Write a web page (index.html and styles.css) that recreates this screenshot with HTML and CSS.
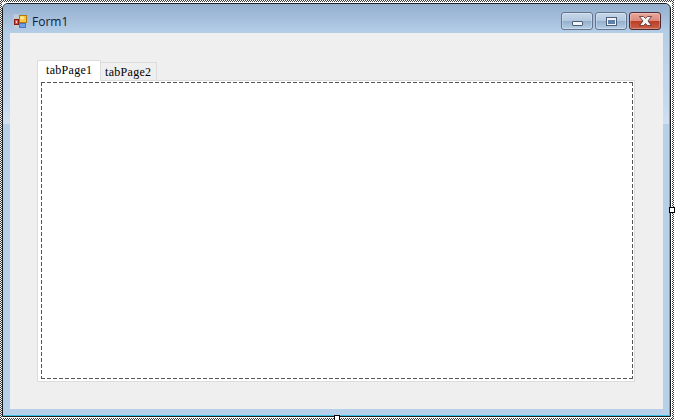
FILE: index.html
```html
<!DOCTYPE html>
<html lang="en">
<head>
<meta charset="utf-8">
<title>Form1</title>
<link rel="stylesheet" href="styles.css">
</head>
<body>
<div class="selection">
  <div class="window">
    <div class="glass"></div>
    <header class="titlebar">
      <svg class="app-icon" width="15" height="15" viewBox="0 0 15 15">
        <rect x="0.5" y="0.5" width="6" height="6" fill="#c5cbd3"/>
        <rect x="1.5" y="9.500" width="5" height="5" fill="#c5cbd3"/>
        <rect x="1.500" y="5.500" width="4" height="5" fill="#e8524a" stroke="#8c1a14"/>
        <rect x="3" y="7" width="1" height="2" fill="#ffd0c8"/>
        <rect x="6.5" y="1.5" width="7" height="7" fill="#fbc73c" stroke="#b07a10"/>
        <rect x="7.5" y="2.5" width="3" height="3" fill="#ffeca0"/>
        <rect x="6.5" y="9.5" width="6" height="4" fill="#6f9fe4" stroke="#4a78c0"/>
      </svg>
      <span class="title">Form1</span>
      <div class="controls">
        <div class="btn">
          <span class="min-glyph"></span>
        </div>
        <div class="btn">
          <span class="max-glyph"></span>
        </div>
        <div class="btn close">
          <svg width="13" height="10" viewBox="0 0 13 10">
            <path d="M0.500 0.500H4.500L6.500 2.500L8.500 0.500H12.500L9 5L12.500 9.500H8.500L6.500 7.500L4.500 9.500H0.500L4 5Z" fill="#f4f6f8" stroke="#5a2a2a" stroke-width="0.8"/>
          </svg>
        </div>
      </div>
    </header>
    <main class="client">
      <div class="tabs">
        <div class="tab active">tabPage1</div>
        <div class="tab">tabPage2</div>
      </div>
      <div class="page">
        <div class="page-inner"></div>
      </div>
    </main>
  </div>
  <span class="handle handle-right"></span>
  <span class="handle handle-bottom"></span>
</div>
</body>
</html>
```
FILE: styles.css
```css
html, body {
  margin: 0;
  padding: 0;
  background: #fff;
}
body {
  width: 676px;
  height: 420px;
  overflow: hidden;
}
.selection {
  position: relative;
  box-sizing: border-box;
  width: 674px;
  height: 420px;
  padding: 1px 1px 1px 0;
  border: 2px solid transparent;
  background:
    linear-gradient(#fff, #fff) padding-box,
    repeating-conic-gradient(#3a3a3a 0 25%, #fff 0 50%) 0 0 / 2px 2px border-box;
}
.window {
  position: relative;
  box-sizing: border-box;
  width: 669px;
  height: 414px;
  display: flex;
  flex-direction: column;
  border: 1px solid #1c1c1c;
  border-radius: 6px 6px 0 0;
  background: #b6d0ea;
  box-shadow: inset -1px -1px 0 #39c0e0;
}
.glass {
  position: absolute;
  left: 0;
  right: 1px;
  top: 0;
  height: 120px;
  border-radius: 5px 5px 0 0;
  background: linear-gradient(180deg, #94afce 0, #b5cee8 29px, #c6daef 100px, #d0e1f2 120px);
}
.titlebar {
  position: relative;
  flex: none;
  box-sizing: border-box;
  height: 29px;
  display: flex;
  align-items: center;
  padding: 5px 9px 0 10px;
}
.app-icon {
  flex: none;
}
.title {
  margin-left: 4px;
  font: 12px "Open Sans", "Noto Sans", sans-serif;
  color: #0f1c38;
}
.controls {
  margin-left: auto;
  display: flex;
  gap: 2px;
}
.btn {
  box-sizing: border-box;
  width: 32px;
  height: 18px;
  display: flex;
  align-items: center;
  justify-content: center;
  border: 1px solid #64748e;
  border-radius: 3px;
  background: linear-gradient(180deg, #c6d7e9 0, #b3c8de 48%, #93aecb 50%, #b7cfe6 100%);
  box-shadow: inset 0 0 0 1px rgba(255,255,255,.28);
}
.btn.close {
  border-color: #4d2a33;
  background: linear-gradient(180deg, #e8a79c 0, #dd8a7c 48%, #bc3c22 50%, #c9604a 100%);
}
.min-glyph {
  box-sizing: border-box;
  width: 11px;
  height: 5px;
  margin-top: 5px;
  border: 1px solid #4c5c74;
  border-radius: 1px;
  background: #f2f4f7;
}
.max-glyph {
  box-sizing: border-box;
  width: 11px;
  height: 9px;
  border: 2px solid #f2f4f7;
  border-top-width: 3px;
  outline: 1px solid #4c5c74;
  outline-offset: -1px;
  background: #5f7fa8;
}
.client {
  position: relative;
  box-sizing: border-box;
  width: 653px;
  height: 376px;
  margin-left: 7px;
  padding: 27px 0 0 27px;
  background: #efefef;
}
.tabs {
  position: relative;
  z-index: 1;
  display: flex;
  align-items: flex-end;
  height: 21px;
  margin-bottom: -1px;
}
.tab {
  box-sizing: border-box;
  width: 56px;
  height: 19px;
  border: 1px solid #dcdcdc;
  border-left: 0;
  padding-left: 4px;
  font: 12px/18px "Liberation Serif", serif;
  letter-spacing: 0.3px;
  color: #000;
  background: #efefef;
}
.tab.active {
  width: 64px;
  height: 21px;
  border-left: 1px solid #dcdcdc;
  border-bottom: 0;
  padding-left: 8px;
  background: #fff;
  line-height: 18px;
}
.page {
  box-sizing: border-box;
  width: 598px;
  height: 302px;
  padding: 1px 1px 2px 3px;
  border: 1px solid #dcdcdc;
  background: #fff;
}
.page-inner {
  height: 100%;
  background:
    repeating-linear-gradient(90deg, #555 0 4px, transparent 4px 6px) 0 0 / 100% 1px no-repeat,
    repeating-linear-gradient(90deg, #555 0 4px, transparent 4px 6px) 0 100% / 100% 1px no-repeat,
    repeating-linear-gradient(180deg, #555 0 4px, transparent 4px 6px) 0 0 / 1px 100% no-repeat,
    repeating-linear-gradient(180deg, #555 0 4px, transparent 4px 6px) 100% 0 / 1px 100% no-repeat;
}
.handle {
  position: absolute;
  box-sizing: border-box;
  width: 6px;
  height: 6px;
  background: #fff;
  border: 1px solid #000;
}
.handle-right {
  left: 667px;
  top: 205px;
}
.handle-bottom {
  left: 332px;
  top: 413px;
}
```
